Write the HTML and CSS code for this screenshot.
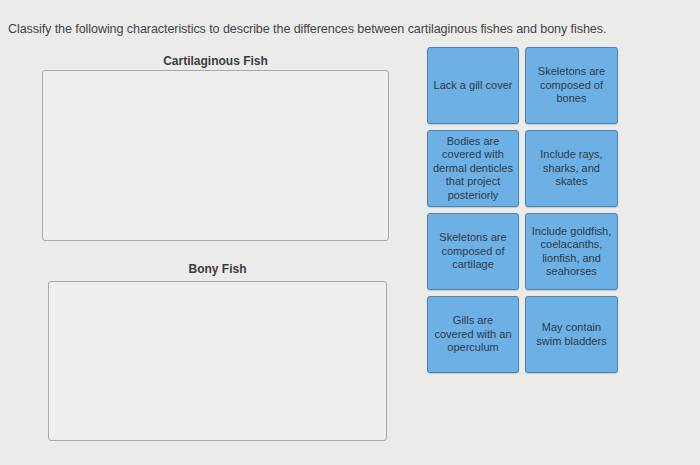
FILE: index.html
```html
<!DOCTYPE html>
<html>
<head>
<meta charset="utf-8">
<link rel="stylesheet" href="styles.css">
</head>
<body>
<p class="prompt">Classify the following characteristics to describe the differences between cartilaginous fishes and bony fishes.</p>
<div class="main">
  <div class="targets">
    <div class="group g1">
      <div class="label">Cartilaginous Fish</div>
      <div class="drop d1"></div>
    </div>
    <div class="group g2">
      <div class="label">Bony Fish</div>
      <div class="drop d2"></div>
    </div>
  </div>
  <div class="tiles">
    <div class="tile">Lack a gill cover</div>
    <div class="tile">Skeletons are composed of bones</div>
    <div class="tile">Bodies are covered with dermal denticles that project posteriorly</div>
    <div class="tile">Include rays, sharks, and skates</div>
    <div class="tile">Skeletons are composed of cartilage</div>
    <div class="tile">Include goldfish, coelacanths, lionfish, and seahorses</div>
    <div class="tile">Gills are<br>covered with an operculum</div>
    <div class="tile">May contain swim bladders</div>
  </div>
</div>
</body>
</html>
```
FILE: styles.css
```css
html, body {
  margin: 0;
  padding: 0;
}
body {
  width: 700px;
  height: 465px;
  background: #ebebea;
  font-family: "Liberation Sans", Arial, sans-serif;
  color: #3a3a3a;
  overflow: hidden;
}
.prompt {
  margin: 0;
  padding: 21px 0 0 8px;
  font-size: 12.6px;
  line-height: 16px;
  color: #444;
  letter-spacing: -0.1px;
}
.main {
  display: flex;
  padding-top: 10px;
}
.targets {
  width: 390px;
  display: flex;
  flex-direction: column;
}
.group {
  display: flex;
  flex-direction: column;
  align-items: center;
}
.g1 {
  margin-left: 42px;
  width: 347px;
  margin-top: 7px;
}
.g1 .label {
  margin-bottom: 2px;
}
.g2 {
  margin-left: 48px;
  width: 339px;
  margin-top: 21px;
}
.g2 .label {
  margin-bottom: 5px;
}
.label {
  font-weight: bold;
  font-size: 12px;
  line-height: 14px;
  color: #3c3c3c;
}
.drop {
  width: 100%;
  box-sizing: border-box;
  border: 1px solid #a8a8a8;
  border-radius: 3px;
  background: #efefee;
}
.d1 { height: 171px; }
.d2 { height: 160px; }
.tiles {
  margin-left: 37px;
  display: grid;
  grid-template-columns: 92px 93px;
  grid-auto-rows: 77px;
  column-gap: 6px;
  row-gap: 6px;
}
.tile {
  box-sizing: border-box;
  background: #6db0e5;
  border: 1px solid #5082b0;
  border-radius: 3px;
  box-shadow: 0 1px 1px rgba(0,0,0,0.15);
  display: flex;
  align-items: center;
  justify-content: center;
  text-align: center;
  padding: 0 3px;
  font-size: 11px;
  line-height: 13.5px;
  color: #2f3a45;
}
```
